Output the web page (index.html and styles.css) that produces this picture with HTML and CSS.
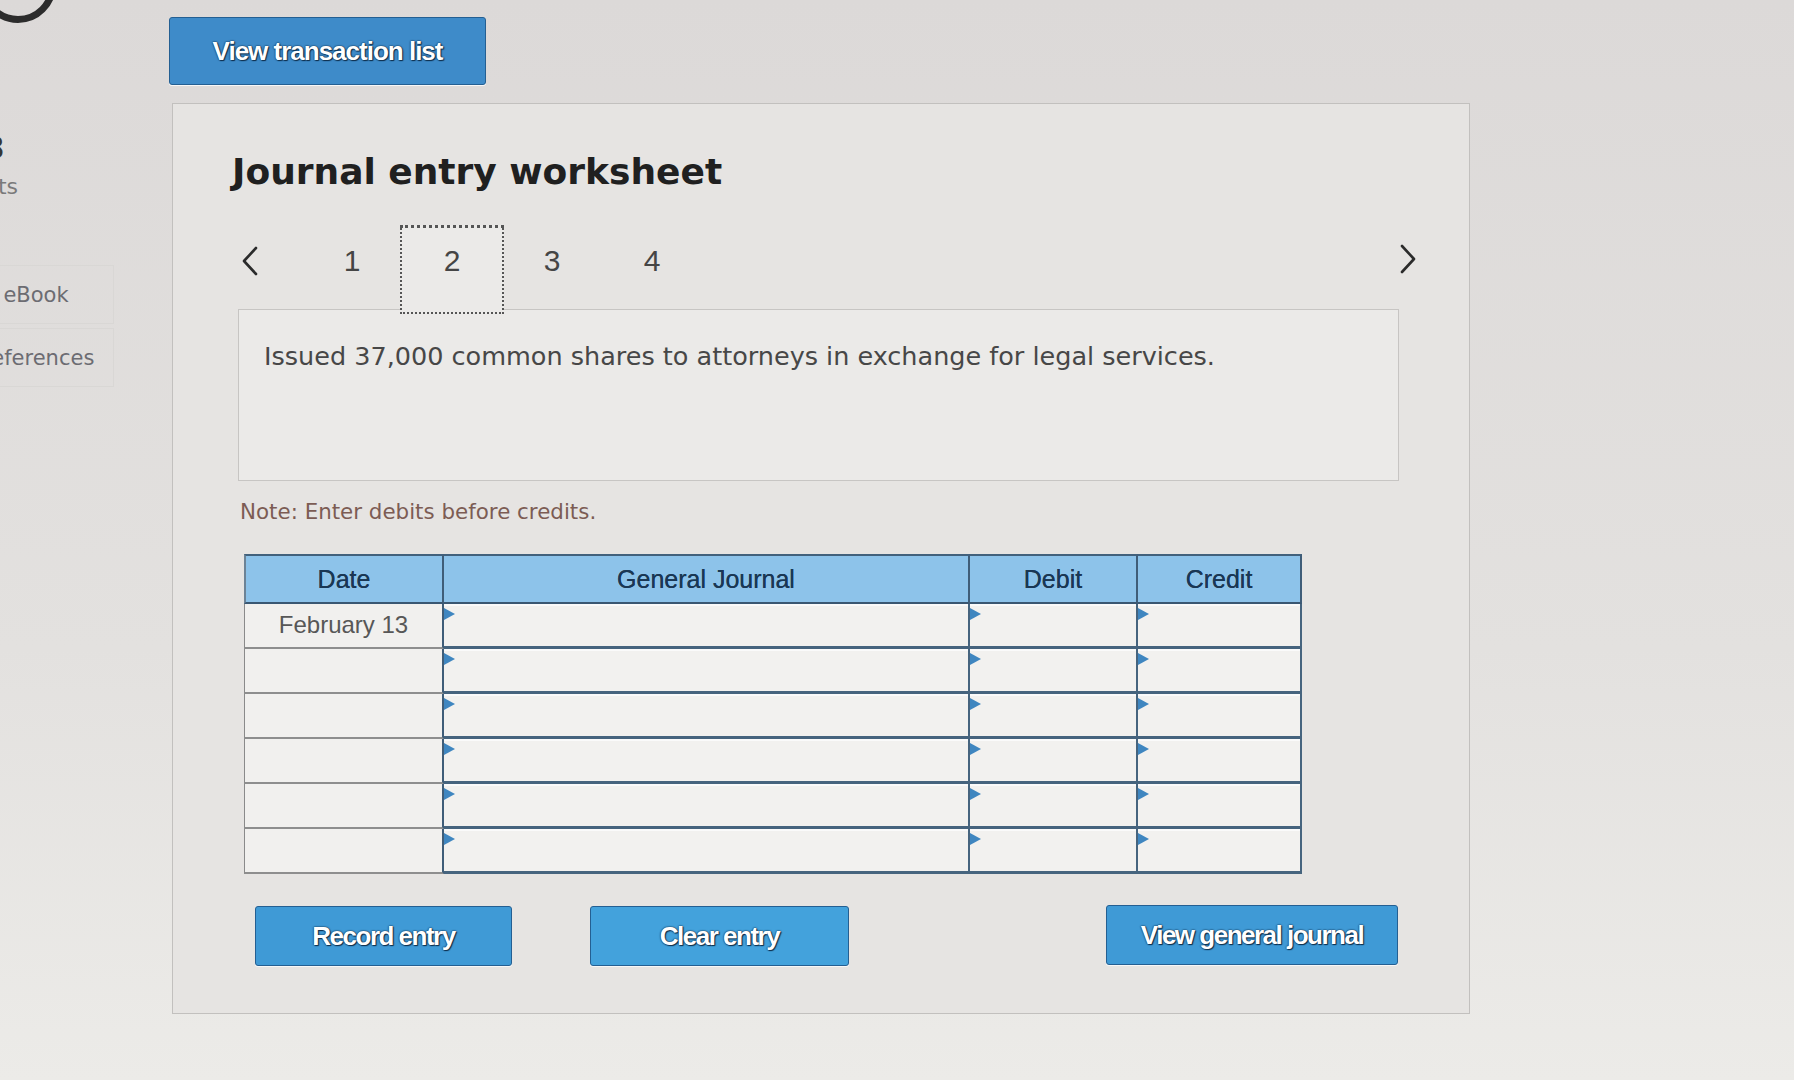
FILE: index.html
```html
<!DOCTYPE html>
<html lang="en">

<head>
    <meta charset="UTF-8">
    <meta name="viewport" content="width=device-width, initial-scale=1.0">
    <title>Journal entry worksheet</title>
    <link rel="stylesheet" href="styles.css">
</head>

<body>
    <div class="screen">
        <div class="sidebar">
            <div class="ring"></div>
            <div class="score">
                <div class="score-num">3</div>
                <div class="score-label">points</div>
            </div>
            <div class="side-link">eBook</div>
            <div class="side-link">References</div>
        </div>

        <div class="main">
            <button class="btn btn-top">View transaction list</button>

            <div class="panel">
                <h1 class="title">Journal entry worksheet</h1>

                <div class="pager">
                    <span class="chevron">
                        <svg width="18" height="32" viewBox="0 0 18 32"><path d="M15 3 L3 16 L15 29" fill="none" stroke="#2b2b2b" stroke-width="2.6" stroke-linecap="round" stroke-linejoin="round"/></svg>
                    </span>
                    <div class="tabs">
                        <span class="tab">1</span>
                        <span class="tab tab-active">2</span>
                        <span class="tab">3</span>
                        <span class="tab">4</span>
                    </div>
                    <span class="chevron chevron-next">
                        <svg width="18" height="32" viewBox="0 0 18 32"><path d="M3 3 L15 16 L3 29" fill="none" stroke="#2b2b2b" stroke-width="2.6" stroke-linecap="round" stroke-linejoin="round"/></svg>
                    </span>
                </div>

                <div class="question">
                    Issued 37,000 common shares to attorneys in exchange for legal services.
                </div>

                <p class="note">Note: Enter debits before credits.</p>

                <div class="journal">
                    <div class="th th-first">Date</div>
                    <div class="th">General Journal</div>
                    <div class="th">Debit</div>
                    <div class="th">Credit</div>

                    <div class="date">February 13</div>
                    <div class="cell"></div>
                    <div class="cell"></div>
                    <div class="cell"></div>

                    <div class="date"></div>
                    <div class="cell"></div>
                    <div class="cell"></div>
                    <div class="cell"></div>

                    <div class="date"></div>
                    <div class="cell"></div>
                    <div class="cell"></div>
                    <div class="cell"></div>

                    <div class="date"></div>
                    <div class="cell"></div>
                    <div class="cell"></div>
                    <div class="cell"></div>

                    <div class="date"></div>
                    <div class="cell"></div>
                    <div class="cell"></div>
                    <div class="cell"></div>

                    <div class="date"></div>
                    <div class="cell"></div>
                    <div class="cell"></div>
                    <div class="cell"></div>
                </div>

                <div class="actions">
                    <button class="btn btn-record">Record entry</button>
                    <button class="btn btn-clear">Clear entry</button>
                    <button class="btn btn-view">View general journal</button>
                </div>
            </div>
        </div>
    </div>
</body>

</html>
```

FILE: styles.css
```css
body {
    margin: 0;
    height: 1080px;
    overflow: hidden;
    background: linear-gradient(#dcd9d8, #e3e1df 60%, #ecebe8);
    font-family: "DejaVu Sans", Verdana, sans-serif;
}

.screen {
    display: flex;
    align-items: flex-start;
}

/* left column, mostly cut off by the window edge */
.sidebar {
    width: 156px;
    margin-left: -42px;
    flex-shrink: 0;
}

.ring {
    width: 62px;
    height: 62px;
    margin-top: -53px;
    margin-left: 22px;
    border: 7px solid #2c2c2c;
    border-radius: 50%;
}

.score {
    display: flex;
    flex-direction: column;
    align-items: flex-end;
    margin-top: 107px;
    padding-right: 96px;
}

.score-num {
    font-size: 32px;
    line-height: 36px;
    font-weight: bold;
    color: #353535;
    margin-right: 13px;
}

.score-label {
    margin-top: 7px;
    font-size: 22px;
    line-height: 28px;
    color: #7a7a7a;
    white-space: nowrap;
}

.side-link {
    height: 59px;
    margin-top: 4px;
    line-height: 59px;
    text-align: center;
    font-size: 21px;
    color: #6c6c72;
    border: 1px solid #d9d7d5;
    box-sizing: border-box;
}

.score + .side-link {
    margin-top: 64px;
}

.main {
    margin-left: 55px;
}

.btn {
    display: block;
    height: 60px;
    padding: 0;
    border: 1px solid #245f92;
    border-radius: 3px;
    background: #3f9ad6;
    color: #fff;
    font-family: "Liberation Sans", Arial, sans-serif;
    font-size: 26px;
    font-weight: bold;
    letter-spacing: -1.5px;
    text-shadow: 0 0 1px #0f2f4d, 0 0 2px #0f2f4d, 1px 1px 1px #0f2f4d;
    box-shadow: 0 1px 0 #f7f7f7;
}

.btn-top {
    width: 317px;
    height: 68px;
    margin-top: 17px;
    background: #3e8bc9;
    letter-spacing: -1px;
}

.panel {
    width: 1298px;
    height: 911px;
    margin-top: 18px;
    margin-left: 3px;
    padding: 46px 0 0 59px;
    box-sizing: border-box;
    border: 1px solid #c2c0be;
    background: #e6e4e2;
}

.title {
    margin: 0;
    font-size: 36px;
    line-height: 43px;
    font-weight: bold;
    color: #202020;
}

.pager {
    display: flex;
    align-items: flex-start;
    width: 1185px;
    margin-top: 32px;
    margin-bottom: -5px;
}

.chevron {
    display: block;
    margin-top: 20px;
    margin-left: 9px;
}

.chevron-next {
    margin-left: auto;
    margin-top: 18px;
}

.tabs {
    display: flex;
    margin-left: 43px;
}

.tab {
    width: 100px;
    height: 89px;
    padding-top: 20px;
    box-sizing: border-box;
    text-align: center;
    font-family: "Liberation Sans", Arial, sans-serif;
    font-size: 30px;
    line-height: 32px;
    color: #454545;
}

.tab-active {
    position: relative;
    z-index: 1;
    width: 104px;
    margin: 0 -2px;
    border: 2px dotted #555;
    border-top-width: 3px;
    padding-top: 17px;
    background: #ebeae8;
}

.question {
    width: 1161px;
    height: 172px;
    margin-left: 6px;
    padding: 30px 0 0 25px;
    box-sizing: border-box;
    border: 1px solid #c7c5c3;
    background: #ebeae8;
    font-size: 25.5px;
    line-height: 32px;
    color: #474747;
}

.note {
    margin: 18px 0 0 8px;
    font-size: 21.4px;
    line-height: 26px;
    color: #7c5c54;
}

.journal {
    display: grid;
    grid-template-columns: 200px 526px 168px 164px;
    grid-auto-rows: 45px;
    grid-template-rows: 50px;
    width: 1058px;
    margin-top: 29px;
    margin-left: 12px;
}

.th {
    border-top: 2px solid #42617c;
    border-bottom: 2px solid #3a5772;
    border-right: 2px solid #3f5d78;
    background: #8dc3ea;
    text-align: center;
    font-family: "Liberation Sans", Arial, sans-serif;
    font-size: 25px;
    line-height: 46px;
    color: #1a3754;
    text-shadow: 0 0 0.5px #1a3754;
}

.th-first {
    border-left: 2px solid #6d8396;
}

.date {
    border-left: 1px solid #8a8a8a;
    border-bottom: 2px solid #8e8e8e;
    border-right: 2px solid #3f5d78;
    background: #f1f0ee;
    text-align: center;
    font-family: "Liberation Sans", Arial, sans-serif;
    font-size: 24px;
    line-height: 42px;
    color: #575757;
}

.cell {
    position: relative;
    border-bottom: 3px solid #46647e;
    border-right: 2px solid #46647e;
    background: #f2f1ef;
    box-shadow: inset 0 2px 0 #fafafa;
}

/* small blue flag at the top left of each input */
.cell::before {
    content: "";
    position: absolute;
    left: 0;
    top: 4px;
    border-top: 6px solid transparent;
    border-bottom: 6px solid transparent;
    border-left: 11px solid #3f86c0;
}

.actions {
    display: flex;
    width: 1143px;
    margin-top: 32px;
    margin-left: 23px;
}

.btn-record {
    width: 257px;
}

.btn-clear {
    width: 259px;
    margin-left: 78px;
    background: #43a2dc;
}

.btn-view {
    width: 292px;
    margin-left: auto;
    margin-top: -1px;
}
```
